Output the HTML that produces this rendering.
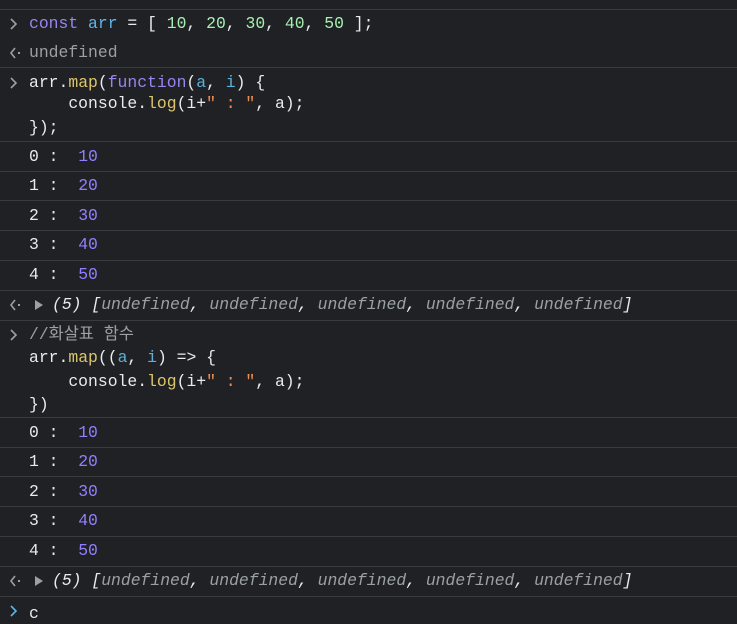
<!DOCTYPE html>
<html><head><meta charset="utf-8"><style>
body{margin:0;background:#202124;width:737px;height:611px;overflow:hidden;position:relative;font-family:"Liberation Mono","Noto Sans CJK KR",monospace;font-size:16.4px;color:#e8eaed}
.l{position:absolute;left:29px;white-space:pre;line-height:20px}
.s{position:absolute;left:0;width:737px;height:1px;background:#3a3b3e}
.k{color:#9a84f0}.v{color:#5fb4e8}.n{color:#a7f0b2}.f{color:#dcc66a}.st{color:#f28b54}.p{color:#5db0d7}.o{color:#8f80ff}.g{color:#9aa0a6}.i{font-style:italic}
svg.c{position:absolute;left:8px;width:12px;height:14px}
.tri{position:absolute;left:35px;width:0;height:0;border-left:8px solid #9aa0a6;border-top:5px solid transparent;border-bottom:5px solid transparent}
</style></head><body>
<div class="s" style="top:9px"></div>
<svg class="c" style="top:17px"><polyline points="3,2 8,7 3,12" fill="none" stroke="#9aa0a6" stroke-width="1.6"/></svg>
<div class="l" style="top:14px"><span class="k">const</span> <span class="v">arr</span> = [ <span class="n">10</span>, <span class="n">20</span>, <span class="n">30</span>, <span class="n">40</span>, <span class="n">50</span> ];</div>
<svg class="c" style="top:46px;width:16px"><polyline points="7,2 3,7 7,12" fill="none" stroke="#9aa0a6" stroke-width="1.6"/><rect x="10" y="6" width="2" height="2" fill="#9aa0a6"/></svg>
<div class="l g" style="top:43px">undefined</div>
<div class="s" style="top:67px"></div>
<svg class="c" style="top:76px"><polyline points="3,2 8,7 3,12" fill="none" stroke="#9aa0a6" stroke-width="1.6"/></svg>
<div class="l" style="top:73px">arr.<span class="f">map</span>(<span class="k">function</span>(<span class="p">a</span>, <span class="p">i</span>) {</div>
<div class="l" style="top:94px">    console.<span class="f">log</span>(i+<span class="st">" : "</span>, a);</div>
<div class="l" style="top:118px">});</div>
<div class="s" style="top:141px"></div>
<div class="l" style="top:147px">0 :  <span class="o">10</span></div>
<div class="s" style="top:171px"></div>
<div class="l" style="top:176px">1 :  <span class="o">20</span></div>
<div class="s" style="top:200px"></div>
<div class="l" style="top:206px">2 :  <span class="o">30</span></div>
<div class="s" style="top:230px"></div>
<div class="l" style="top:235px">3 :  <span class="o">40</span></div>
<div class="s" style="top:260px"></div>
<div class="l" style="top:265px">4 :  <span class="o">50</span></div>
<div class="s" style="top:290px"></div>
<svg class="c" style="top:298px;width:16px"><polyline points="7,2 3,7 7,12" fill="none" stroke="#9aa0a6" stroke-width="1.6"/><rect x="10" y="6" width="2" height="2" fill="#9aa0a6"/></svg>
<div class="tri" style="top:300px"></div>
<div class="l i" style="top:295px;left:52px">(5) [<span class="g">undefined</span>, <span class="g">undefined</span>, <span class="g">undefined</span>, <span class="g">undefined</span>, <span class="g">undefined</span>]</div>
<div class="s" style="top:320px"></div>
<svg class="c" style="top:328px"><polyline points="3,2 8,7 3,12" fill="none" stroke="#9aa0a6" stroke-width="1.6"/></svg>
<div class="l g" style="top:325px">//화살표 함수</div>
<div class="l" style="top:348px">arr.<span class="f">map</span>((<span class="p">a</span>, <span class="p">i</span>) =&gt; {</div>
<div class="l" style="top:372px">    console.<span class="f">log</span>(i+<span class="st">" : "</span>, a);</div>
<div class="l" style="top:395px">})</div>
<div class="s" style="top:417px"></div>
<div class="l" style="top:423px">0 :  <span class="o">10</span></div>
<div class="s" style="top:447px"></div>
<div class="l" style="top:452px">1 :  <span class="o">20</span></div>
<div class="s" style="top:476px"></div>
<div class="l" style="top:482px">2 :  <span class="o">30</span></div>
<div class="s" style="top:506px"></div>
<div class="l" style="top:511px">3 :  <span class="o">40</span></div>
<div class="s" style="top:536px"></div>
<div class="l" style="top:541px">4 :  <span class="o">50</span></div>
<div class="s" style="top:566px"></div>
<svg class="c" style="top:574px;width:16px"><polyline points="7,2 3,7 7,12" fill="none" stroke="#9aa0a6" stroke-width="1.6"/><rect x="10" y="6" width="2" height="2" fill="#9aa0a6"/></svg>
<div class="tri" style="top:576px"></div>
<div class="l i" style="top:571px;left:52px">(5) [<span class="g">undefined</span>, <span class="g">undefined</span>, <span class="g">undefined</span>, <span class="g">undefined</span>, <span class="g">undefined</span>]</div>
<div class="s" style="top:596px"></div>
<svg class="c" style="top:604px"><polyline points="3,2 8,7 3,12" fill="none" stroke="#5fb4e8" stroke-width="1.6"/></svg>
<div class="l" style="top:604px">c</div>
</body></html>
